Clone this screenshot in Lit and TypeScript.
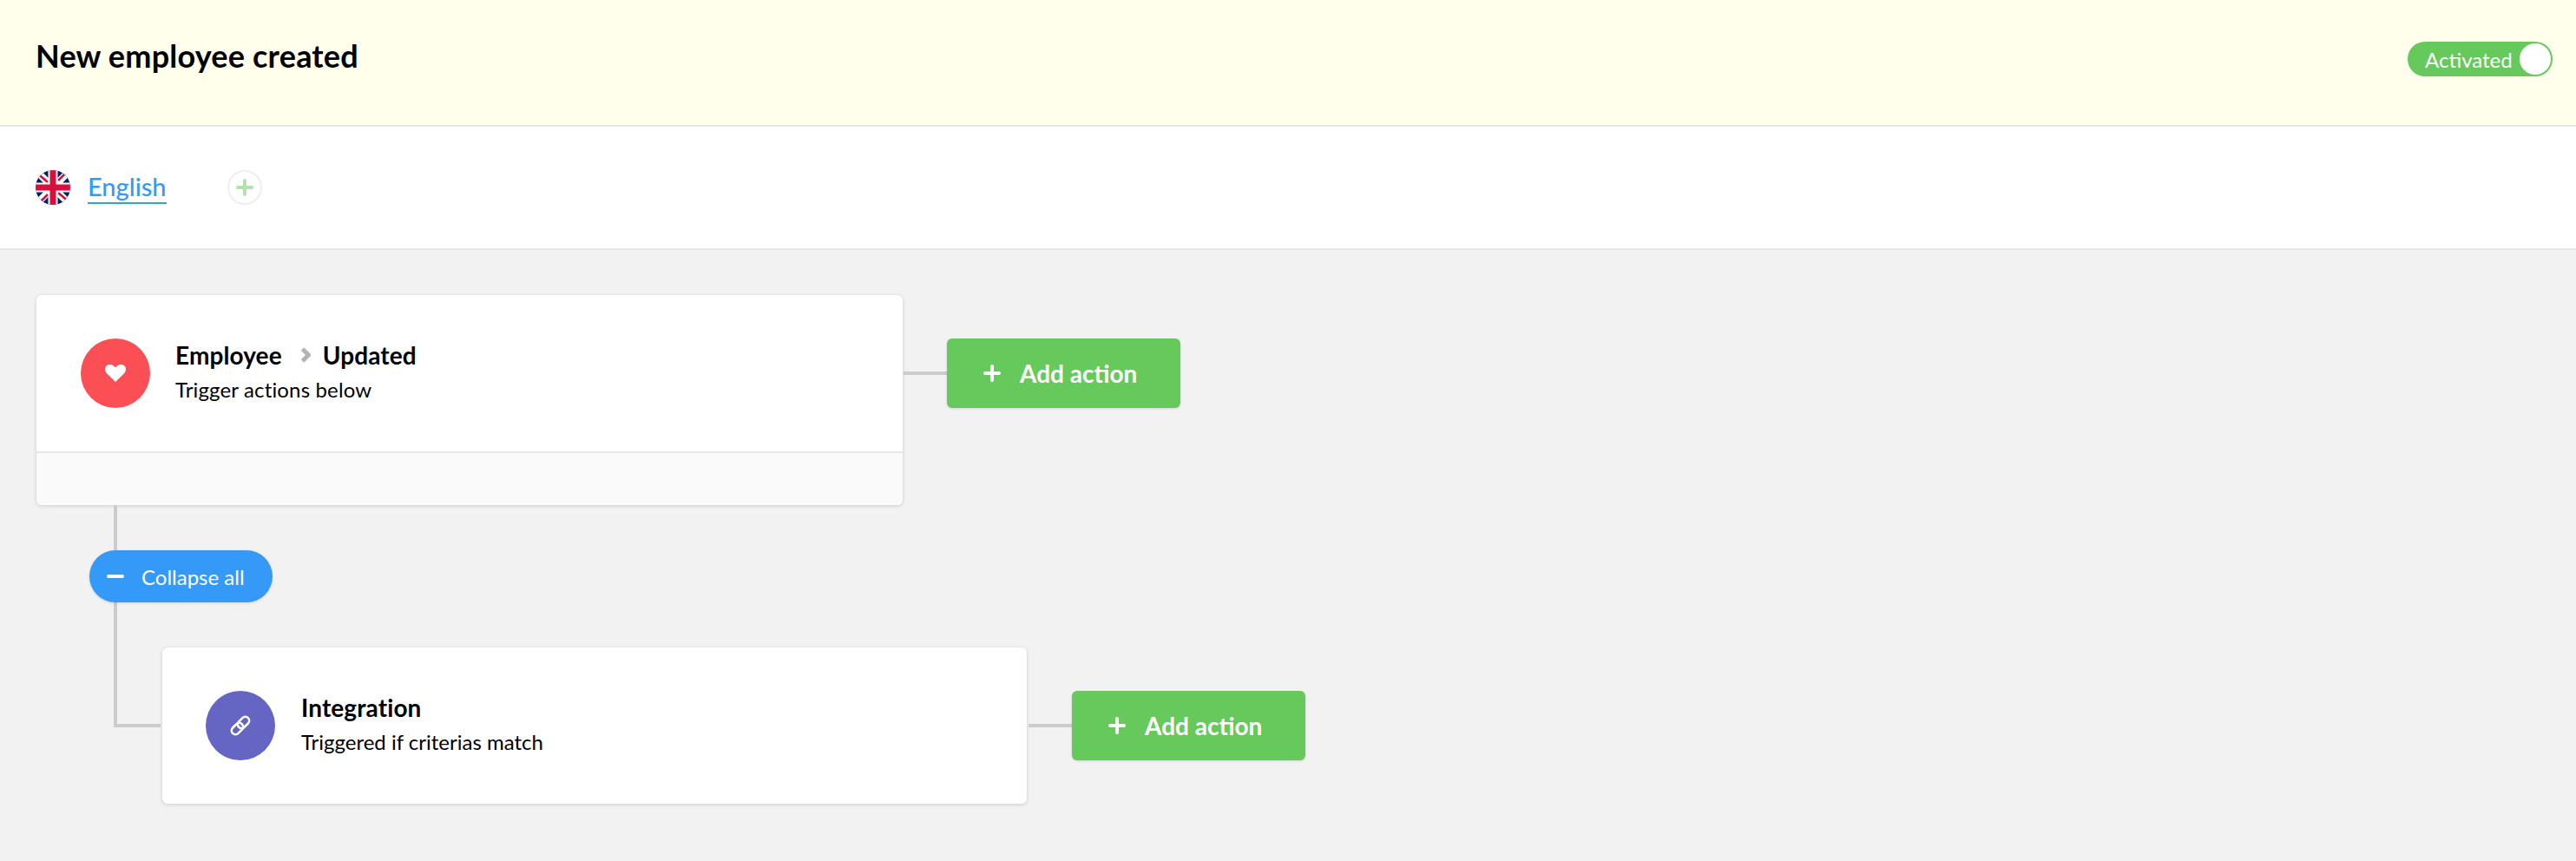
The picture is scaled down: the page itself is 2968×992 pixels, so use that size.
import { LitElement, html, css, svg } from "lit";
import { customElement } from "lit/decorators.js";

const flag = svg`<svg class="flag" viewBox="0 0 40 40" width="40" height="40" aria-hidden="true">
  <defs><clipPath id="fc"><circle cx="20" cy="20" r="20"/></clipPath></defs>
  <g clip-path="url(#fc)">
    <rect width="40" height="40" fill="#012169"/>
    <path d="M0 0L40 40M40 0L0 40" stroke="#fff" stroke-width="8"/>
    <path d="M0 2L14 14M40 38L26 26M38 0L26 12M2 40L14 28" stroke="#d80f3c" stroke-width="2.6"/>
    <path d="M20 0V40M0 20H40" stroke="#fff" stroke-width="11"/>
    <path d="M20 0V40M0 20H40" stroke="#d80f3c" stroke-width="7"/>
  </g>
</svg>`;

const plus = () => svg`<svg viewBox="0 0 20 20" width="20" height="20" aria-hidden="true">
  <path d="M10 2V18M2 10H18" fill="none" stroke="currentColor" stroke-width="4" stroke-linecap="round"/>
</svg>`;

const heart = svg`<svg viewBox="0 0 24 20" width="24" height="20" aria-hidden="true">
  <path d="M12 20L2 10.2C-.6 7.4-.6 3.4 1.7 1.4 4.2-.6 8-.4 10.2 1.8L12 3.6l1.8-1.8C16-.4 19.8-.6 22.3 1.4c2.3 2 2.3 6 -.3 8.8z" fill="#fff"/>
</svg>`;

const link = svg`<svg viewBox="0 0 26 24" width="26" height="24" aria-hidden="true">
  <g fill="none" stroke="#fff" stroke-width="2.6" transform="rotate(-45 13 12)">
    <rect x="0.5" y="7.5" width="15" height="9" rx="4.5"/>
    <rect x="10.5" y="7.5" width="15" height="9" rx="4.5"/>
  </g>
</svg>`;

const chevron = svg`<svg class="chev" viewBox="0 0 12 18" width="12" height="18" aria-hidden="true">
  <path d="M2.5 2L9.5 9L2.5 16" fill="none" stroke="#b3b3b3" stroke-width="5"/>
</svg>`;

@customElement("app-root")
export class AppRoot extends LitElement {
  static styles = css`
    :host {
      display: block;
      width: 2968px;
      height: 992px;
      overflow: hidden;
      background: #f2f2f2;
      font-family: "Lato", "Liberation Sans", sans-serif;
      color: #000;
    }
    .header {
      height: 146px;
      box-sizing: border-box;
      background: #ffffeb;
      border-bottom: 2px solid #e6e6e6;
      display: flex;
      align-items: center;
      justify-content: space-between;
      padding: 0 27px 8px 41px;
    }
    .title {
      font-size: 36px;
      font-weight: 700;
      letter-spacing: 0.2px;
      margin: 0 0 8px;
    }
    .toggle {
      width: 167px;
      height: 40px;
      box-sizing: border-box;
      border-radius: 20px;
      background: #66c95c;
      color: #fff;
      font-size: 24px;
      display: flex;
      align-items: center;
      justify-content: space-between;
      padding: 0 2px 0 20px;
    }
    .knob {
      width: 36px;
      height: 36px;
      border-radius: 50%;
      background: #fff;
    }
    .langs {
      height: 142px;
      box-sizing: border-box;
      background: #fff;
      border-bottom: 2px solid #e6e6e6;
      display: flex;
      align-items: center;
      padding-left: 41px;
    }
    .flag { display: block; }
    .lang {
      margin-left: 20px;
      color: #3499f7;
      font-size: 29px;
      font-weight: 500;
      line-height: 36px;
      border-bottom: 2px solid #3499f7;
    }
    .add-lang {
      margin-left: 70px;
      width: 40px;
      height: 40px;
      box-sizing: border-box;
      border-radius: 50%;
      border: 2px solid #eeeeee;
      color: #b3e2ae;
      display: flex;
      align-items: center;
      justify-content: center;
    }
    .main { padding: 52px 42px 0; }
    .row { display: flex; align-items: flex-start; }
    .card {
      background: #fff;
      border-radius: 6px;
      box-shadow: 0 1px 4px rgba(0, 0, 0, 0.16);
      flex: none;
    }
    .card.first { width: 998px; }
    .card.second { width: 996px; }
    .body {
      height: 180px;
      box-sizing: border-box;
      display: flex;
      align-items: center;
      padding: 0 0 6px 51px;
      gap: 30px;
    }
    .first .body { gap: 29px; }
    .foot {
      height: 62px;
      box-sizing: border-box;
      background: #fafafa;
      border-top: 2px solid #e6e6e6;
      border-radius: 0 0 6px 6px;
    }
    .icon {
      width: 80px;
      height: 80px;
      margin-bottom: -6px;
      border-radius: 50%;
      display: flex;
      align-items: center;
      justify-content: center;
      flex: none;
    }
    .second .icon { margin-left: -1px; }
    .icon.red { background: #fb4f56; }
    .icon.purple { background: #6566c3; }
    .name {
      font-size: 28px;
      font-weight: 700;
      letter-spacing: 0.1px;
      line-height: 36px;
      display: flex;
      align-items: center;
    }
    .chev { margin: 0 14px 0 21px; }
    .desc {
      font-size: 24px;
      letter-spacing: 0.15px;
      line-height: 30px;
      margin-top: 7px;
    }
    .second .desc { letter-spacing: 0; }
    .side {
      height: 180px;
      display: flex;
      align-items: center;
      padding-left: 2px;
    }
    .line {
      width: 50px;
      height: 4px;
      background: #cccccc;
      flex: none;
    }
    .first + .side { padding-left: 1px; }
    .action {
      width: 269px;
      height: 80px;
      box-sizing: border-box;
      background: #66c95c;
      border-radius: 6px;
      box-shadow: 0 1px 3px rgba(0, 0, 0, 0.12);
      color: #fff;
      font-size: 28px;
      font-weight: 700;
      display: flex;
      align-items: center;
      padding-left: 42px;
      gap: 22px;
      flex: none;
    }
    .branch { display: flex; margin-left: 89px; align-items: flex-start; }
    .elbow {
      width: 54px;
      height: 256px;
      box-sizing: border-box;
      border-left: 4px solid #cccccc;
      border-bottom: 4px solid #cccccc;
      position: relative;
      flex: none;
    }
    .collapse {
      position: absolute;
      left: -32px;
      top: 52px;
      width: 211px;
      height: 60px;
      box-sizing: border-box;
      border-radius: 30px;
      background: #3499f7;
      box-shadow: 0 1px 3px rgba(0, 0, 0, 0.14);
      color: #fff;
      font-size: 24px;
      display: flex;
      align-items: center;
      padding-left: 20px;
      gap: 20px;
    }
    .minus {
      width: 20px;
      height: 4px;
      border-radius: 2px;
      background: #fff;
    }
    .nested { margin: 164px 0 0 2px; }
  `;

  render() {
    return html`
      <div class="header">
        <h1 class="title">New employee created</h1>
        <div class="toggle"><span>Activated</span><span class="knob"></span></div>
      </div>
      <div class="langs">
        ${flag}
        <span class="lang">English</span>
        <span class="add-lang">${plus()}</span>
      </div>
      <div class="main">
        <div class="row">
          <div class="card first">
            <div class="body">
              <div class="icon red">${heart}</div>
              <div>
                <div class="name"><span>Employee</span>${chevron}<span>Updated</span></div>
                <div class="desc">Trigger actions below</div>
              </div>
            </div>
            <div class="foot"></div>
          </div>
          <div class="side">
            <div class="line"></div>
            <div class="action">${plus()}<span>Add action</span></div>
          </div>
        </div>
        <div class="branch">
          <div class="elbow">
            <div class="collapse"><span class="minus"></span><span>Collapse all</span></div>
          </div>
          <div class="row nested">
            <div class="card second">
              <div class="body">
                <div class="icon purple">${link}</div>
                <div>
                  <div class="name">Integration</div>
                  <div class="desc">Triggered if criterias match</div>
                </div>
              </div>
            </div>
            <div class="side">
              <div class="line"></div>
              <div class="action">${plus()}<span>Add action</span></div>
            </div>
          </div>
        </div>
      </div>
    `;
  }
}
